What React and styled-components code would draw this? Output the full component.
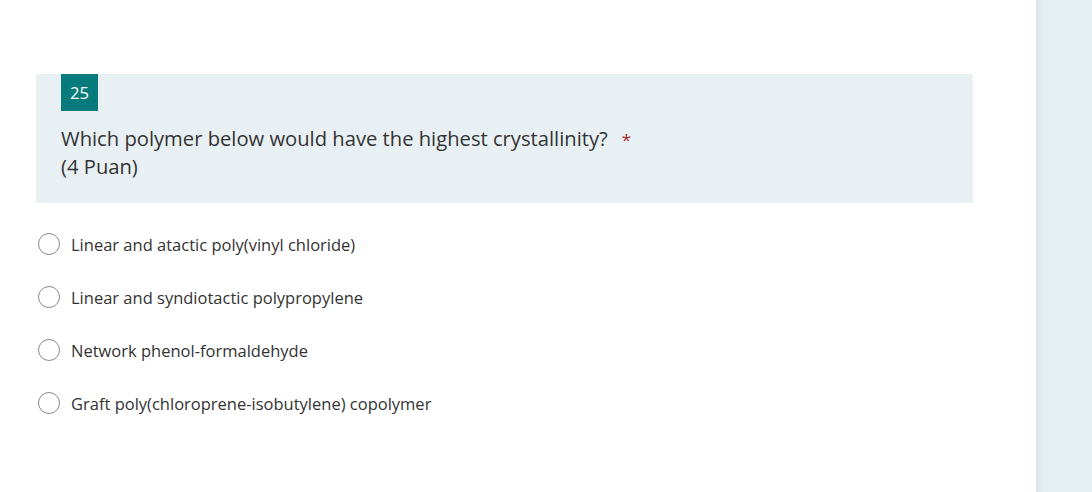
import React from "react";
import styled, { createGlobalStyle } from "styled-components";

const Global = createGlobalStyle`
  html, body { margin: 0; padding: 0; background: #fff; }
  body { font-family: "Segoe UI", "Open Sans", "Noto Sans", sans-serif; }
`;

const Page = styled.div`
  display: flex;
  width: 1092px;
  height: 492px;
  overflow: hidden;
`;

const Main = styled.main`
  width: 1036px;
  flex: none;
  padding: 74px 63px 0 36px;
  box-sizing: border-box;
`;

const Side = styled.aside`
  flex: 1;
  background: linear-gradient(to right, #dbe6ea 0px, #e5eef1 8px, #e6eff2 100%);
`;

const QuestionCard = styled.section`
  background: #e8f0f3;
  padding: 0 25px 24px;
  height: 129px;
  box-sizing: border-box;
`;

const Badge = styled.div`
  width: 37px;
  height: 37px;
  background: #077b7b;
  color: #fff;
  font-size: 16.5px;
  display: flex;
  align-items: center;
  justify-content: center;
`;

const Title = styled.div`
  margin-top: 14px;
  font-size: 20.2px;
  line-height: 27px;
  color: #333;
`;

const Star = styled.span`
  color: #a4262c;
  margin-left: 14px;
  font-size: 17px;
`;

const Options = styled.div`
  display: flex;
  flex-direction: column;
  gap: 29px;
  margin-top: 29px;
  padding-left: 2px;
`;

const Option = styled.label`
  display: flex;
  align-items: center;
  gap: 11px;
  height: 24px;
  font-size: 16.5px;
  color: #333;
`;

const Radio = styled.span`
  width: 20px;
  height: 20px;
  border: 1.5px solid #8a8a8a;
  border-radius: 50%;
  flex: none;
`;

const options = [
  "Linear and atactic poly(vinyl chloride)",
  "Linear and syndiotactic polypropylene",
  "Network phenol-formaldehyde",
  "Graft poly(chloroprene-isobutylene) copolymer",
];

export default function App() {
  return (
    <>
      <Global />
      <Page>
        <Main>
          <QuestionCard>
            <Badge>25</Badge>
            <Title>
              Which polymer below would have the highest crystallinity?
              <Star>*</Star>
              <br />
              (4 Puan)
            </Title>
          </QuestionCard>
          <Options>
            {options.map((o) => (
              <Option key={o}>
                <Radio />
                {o}
              </Option>
            ))}
          </Options>
        </Main>
        <Side />
      </Page>
    </>
  );
}
